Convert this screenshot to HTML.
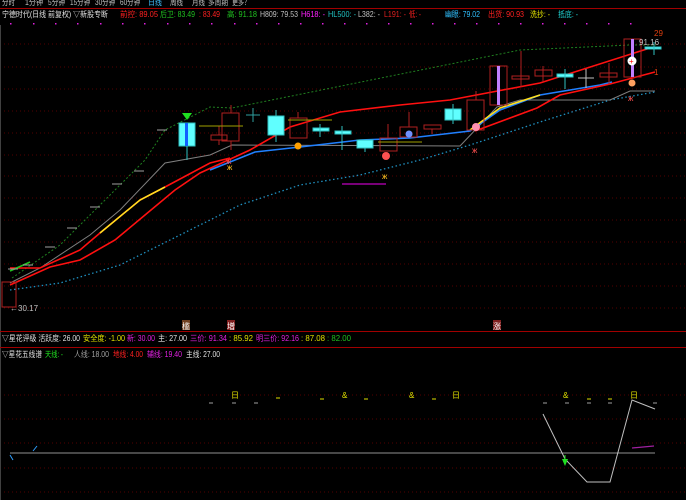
<!DOCTYPE html>
<html><head><meta charset="utf-8"><style>
html,body{margin:0;padding:0;background:#000;}
body{width:686px;height:500px;overflow:hidden;}
svg{display:block;font-family:"Liberation Sans","Noto Sans CJK SC",sans-serif;}
</style></head><body>
<svg width="686" height="500" viewBox="0 0 686 500" xmlns="http://www.w3.org/2000/svg">
<rect width="686" height="500" fill="#000"/>
<g font-size="8" fill="#c0c0c0" lengthAdjust="spacingAndGlyphs">
<text x="2" y="5" textLength="13" lengthAdjust="spacingAndGlyphs">分时</text><text x="25" y="5" textLength="18" lengthAdjust="spacingAndGlyphs">1分钟</text><text x="48" y="5" textLength="17" lengthAdjust="spacingAndGlyphs">5分钟</text><text x="70" y="5" textLength="20" lengthAdjust="spacingAndGlyphs">15分钟</text><text x="95" y="5" textLength="20" lengthAdjust="spacingAndGlyphs">30分钟</text><text x="120" y="5" textLength="20" lengthAdjust="spacingAndGlyphs">60分钟</text>
<text x="148" y="5" fill="#40c0ff" textLength="14" lengthAdjust="spacingAndGlyphs">日线</text><text x="170" y="5" textLength="13" lengthAdjust="spacingAndGlyphs">周线</text><text x="192" y="5" textLength="13" lengthAdjust="spacingAndGlyphs">月线</text><text x="208" y="5" textLength="20" lengthAdjust="spacingAndGlyphs">多周期</text><text x="232" y="5" textLength="18" lengthAdjust="spacingAndGlyphs">更多？</text>
</g>
<line x1="0" y1="8.5" x2="686" y2="8.5" stroke="#a00000"/>
<g font-size="8">
<text x="2" y="17" fill="#e0e0e0" textLength="106" lengthAdjust="spacingAndGlyphs">宁德时代(日线 前复权) ▽新股专断</text>
<text x="120" y="17" fill="#ff2020" textLength="38" lengthAdjust="spacingAndGlyphs">前控: 89.05</text>
<text x="160" y="17" fill="#20c020" textLength="35" lengthAdjust="spacingAndGlyphs">后卫: 83.49</text>
<text x="199" y="17" fill="#ff2020" textLength="21" lengthAdjust="spacingAndGlyphs">: 83.49</text>
<text x="227" y="17" fill="#20c020" textLength="30" lengthAdjust="spacingAndGlyphs">高: 91.18</text>
<text x="260" y="17" fill="#c0c0c0" textLength="38" lengthAdjust="spacingAndGlyphs">H809: 79.53</text>
<text x="301" y="17" fill="#ff20ff" textLength="24" lengthAdjust="spacingAndGlyphs">H618: -</text>
<text x="328" y="17" fill="#20c0c0" textLength="28" lengthAdjust="spacingAndGlyphs">HL500: -</text>
<text x="358" y="17" fill="#c0c0c0" textLength="22" lengthAdjust="spacingAndGlyphs">L382: -</text>
<text x="384" y="17" fill="#e02020" textLength="22" lengthAdjust="spacingAndGlyphs">L191: -</text>
<text x="409" y="17" fill="#ff2020" textLength="12" lengthAdjust="spacingAndGlyphs">低: -</text>
<text x="445" y="17" fill="#30c0ff" textLength="35" lengthAdjust="spacingAndGlyphs">幽眼: 79.02</text>
<text x="488" y="17" fill="#ff2020" textLength="36" lengthAdjust="spacingAndGlyphs">出货: 90.93</text>
<text x="530" y="17" fill="#e0e000" textLength="20" lengthAdjust="spacingAndGlyphs">洗抄: -</text>
<text x="558" y="17" fill="#20d0d0" textLength="20" lengthAdjust="spacingAndGlyphs">抵底: -</text>
</g>
<g fill="#e020e0"><rect x="10" y="23" width="1.5" height="1.5"/><rect x="33" y="23" width="1.5" height="1.5"/><rect x="55" y="23" width="1.5" height="1.5"/><rect x="77" y="23" width="1.5" height="1.5"/><rect x="100" y="23" width="1.5" height="1.5"/><rect x="122" y="23" width="1.5" height="1.5"/><rect x="144" y="23" width="1.5" height="1.5"/><rect x="167" y="23" width="1.5" height="1.5"/><rect x="189" y="23" width="1.5" height="1.5"/><rect x="211" y="23" width="1.5" height="1.5"/><rect x="234" y="23" width="1.5" height="1.5"/><rect x="256" y="23" width="1.5" height="1.5"/><rect x="278" y="23" width="1.5" height="1.5"/><rect x="300" y="23" width="1.5" height="1.5"/><rect x="322" y="23" width="1.5" height="1.5"/><rect x="344" y="23" width="1.5" height="1.5"/><rect x="366" y="23" width="1.5" height="1.5"/><rect x="388" y="23" width="1.5" height="1.5"/><rect x="410" y="23" width="1.5" height="1.5"/><rect x="432" y="23" width="1.5" height="1.5"/><rect x="454" y="23" width="1.5" height="1.5"/><rect x="476" y="23" width="1.5" height="1.5"/><rect x="498" y="23" width="1.5" height="1.5"/><rect x="520" y="23" width="1.5" height="1.5"/><rect x="542" y="23" width="1.5" height="1.5"/><rect x="564" y="23" width="1.5" height="1.5"/><rect x="586" y="23" width="1.5" height="1.5"/><rect x="608" y="23" width="1.5" height="1.5"/><rect x="630" y="23" width="1.5" height="1.5"/></g>
<g stroke="#700000" stroke-dasharray="1,3" stroke-width="0.8">
<line x1="0" y1="44" x2="686" y2="44"/><line x1="0" y1="67" x2="686" y2="67"/><line x1="0" y1="89" x2="686" y2="89"/><line x1="0" y1="111" x2="686" y2="111"/><line x1="0" y1="133" x2="686" y2="133"/><line x1="0" y1="155" x2="686" y2="155"/><line x1="0" y1="176" x2="686" y2="176"/><line x1="0" y1="198" x2="686" y2="198"/><line x1="0" y1="220" x2="686" y2="220"/><line x1="0" y1="242" x2="686" y2="242"/><line x1="0" y1="264" x2="686" y2="264"/><line x1="0" y1="286" x2="686" y2="286"/><line x1="0" y1="308" x2="686" y2="308"/>
<line x1="0" y1="395" x2="686" y2="395"/><line x1="0" y1="419" x2="686" y2="419"/><line x1="0" y1="443" x2="686" y2="443"/><line x1="0" y1="468" x2="686" y2="468"/><line x1="0" y1="492" x2="686" y2="492"/>
</g>
<line x1="0.5" y1="25" x2="0.5" y2="500" stroke="#404040"/>
<polyline fill="none" stroke="#208020" stroke-dasharray="2,2" points="12,278 60,245 100,205 145,160 165,130 210,107 232,108 520,50 630,45 656,45"/>
<polyline fill="none" stroke="#2090c0" stroke-dasharray="1.5,2.5" stroke-width="1.3" points="10,290 60,283 120,265 180,235 240,205 300,185 360,175 420,160 470,145 540,122 610,100 655,92"/>
<polyline fill="none" stroke="#808080" points="10,283 40,268 90,235 120,210 165,163 210,155 232,145 460,146 497,107 520,100 610,100 630,91 655,91"/>
<polyline fill="none" stroke="#ff1010" stroke-width="1.6" points="10,268 40,268 80,250 100,233 140,200 165,187 210,163 230,158"/>
<polyline fill="none" stroke="#ffe020" stroke-width="1.6" points="100,233 140,200 165,187"/>
<polyline fill="none" stroke="#ff1010" stroke-width="1.6" points="10,285 50,267 80,260 115,240 145,215 175,190 200,173 250,150 290,127 340,112 400,105 450,100 540,83 650,48"/>
<polyline fill="none" stroke="#2080ff" stroke-width="1.6" points="210,170 255,152 300,147 360,140 410,138 470,131 500,110 540,95 600,85 612,82"/>
<polyline fill="none" stroke="#ffe020" stroke-width="1.6" points="470,130 500,108 540,95"/>
<polyline fill="none" stroke="#ff1010" stroke-width="1.6" points="475,131 537,108 560,95 610,84 655,72"/>
<line x1="10" y1="271" x2="30" y2="262" stroke="#20c020" stroke-width="1.6"/>
<g stroke="#a0a0a0"><line x1="8" y1="269" x2="18" y2="269"/><line x1="23" y1="265" x2="33" y2="265"/><line x1="45" y1="247" x2="55" y2="247"/><line x1="67" y1="228" x2="77" y2="228"/><line x1="90" y1="207" x2="100" y2="207"/><line x1="112" y1="184" x2="122" y2="184"/><line x1="134" y1="171" x2="144" y2="171"/><line x1="157" y1="130" x2="167" y2="130"/></g>
<g fill="none" stroke="#b02020">
<rect x="211" y="135" width="16" height="5"/><line x1="219" y1="126" x2="219" y2="135"/><line x1="219" y1="140" x2="219" y2="145"/>
<rect x="222" y="113" width="17" height="28"/><line x1="231" y1="105" x2="231" y2="113"/><line x1="231" y1="141" x2="231" y2="150"/>
<rect x="290" y="118" width="17" height="20"/><line x1="298" y1="112" x2="298" y2="118"/>
<rect x="380" y="138" width="17" height="13"/><line x1="388" y1="124" x2="388" y2="138"/>
<rect x="400" y="127" width="17" height="10"/><line x1="409" y1="112" x2="409" y2="127"/>
<rect x="424" y="125" width="17" height="4"/><line x1="432" y1="129" x2="432" y2="134"/>
<rect x="467" y="100" width="17" height="30"/><line x1="476" y1="91" x2="476" y2="100"/>
<rect x="490" y="66" width="17" height="39"/>
<rect x="512" y="76" width="17" height="3"/><line x1="521" y1="51" x2="521" y2="87"/>
<rect x="535" y="70" width="17" height="6"/><line x1="543" y1="66" x2="543" y2="82"/>
<rect x="600" y="73" width="17" height="4"/><line x1="609" y1="63" x2="609" y2="85"/>
<rect x="624" y="39" width="17" height="38"/>
</g>
<g fill="#60ffff" stroke="#30c0c0">
<rect x="179" y="123" width="16" height="23"/><line x1="187" y1="146" x2="187" y2="160"/>
<rect x="268" y="116" width="16" height="19"/><line x1="276" y1="110" x2="276" y2="116"/><line x1="276" y1="135" x2="276" y2="142"/>
<rect x="313" y="128" width="16" height="3"/><line x1="320" y1="124" x2="320" y2="137"/>
<rect x="335" y="131" width="16" height="3"/><line x1="342" y1="126" x2="342" y2="150"/>
<rect x="357" y="140" width="16" height="8"/><line x1="365" y1="148" x2="365" y2="152"/>
<rect x="445" y="109" width="16" height="11"/><line x1="453" y1="104" x2="453" y2="124"/>
<rect x="557" y="74" width="16" height="3"/><line x1="565" y1="69" x2="565" y2="89"/>
<rect x="645" y="47" width="16" height="2"/><line x1="654" y1="42" x2="654" y2="55"/>
</g>
<rect x="185" y="123" width="3" height="23" fill="#1060ff"/>
<rect x="497" y="66" width="3" height="39" fill="#c080ff"/>
<rect x="631" y="39" width="3" height="38" fill="#c080ff"/>
<line x1="246" y1="115" x2="260" y2="115" stroke="#30a0a0"/><line x1="253" y1="108" x2="253" y2="122" stroke="#30a0a0"/>
<line x1="578" y1="78" x2="594" y2="78" stroke="#c0c0c0"/><line x1="586" y1="69" x2="586" y2="88" stroke="#c0c0c0"/>
<line x1="199" y1="126" x2="243" y2="126" stroke="#a0a000"/>
<line x1="288" y1="120" x2="332" y2="120" stroke="#a0a000"/>
<line x1="378" y1="142" x2="422" y2="142" stroke="#a0a000"/>
<line x1="342" y1="184" x2="386" y2="184" stroke="#a000a0" stroke-width="1.4"/>
<polygon points="182,113 192,113 187,120" fill="#20e020"/>
<circle cx="298" cy="146" r="3.5" fill="#ffa000"/>
<circle cx="386" cy="156" r="4" fill="#ff5050"/>
<circle cx="409" cy="134" r="3.5" fill="#7090ff"/>
<circle cx="476" cy="127" r="4" fill="#ff90b0"/>
<circle cx="632" cy="61" r="4.5" fill="#fff"/><text x="629" y="64" font-size="8" fill="#f00">+</text>
<circle cx="632" cy="83" r="3.5" fill="#ffa060"/>
<text x="226" y="164" font-size="8" fill="#ff5050">ж</text><text x="227" y="170" font-size="8" fill="#ffc020">ж</text>
<text x="382" y="179" font-size="8" fill="#ffc020">ж</text>
<text x="472" y="153" font-size="8" fill="#ff5050">ж</text>
<text x="628" y="101" font-size="8" fill="#ff5050">ж</text>
<text x="654" y="36" font-size="8" fill="#e04010">29</text>
<text x="654" y="75" font-size="8" fill="#e04010">1</text>
<text x="639" y="45" font-size="8" fill="#c0c0c0">91.16</text>
<rect x="2" y="282" width="14" height="25" fill="none" stroke="#b02020"/>
<text x="10" y="311" font-size="8" fill="#c0c0c0">←30.17</text>
<rect x="182" y="320" width="8" height="10" fill="#704020"/><text x="182" y="329" font-size="8" fill="#fff">槛</text>
<rect x="227" y="320" width="8" height="10" fill="#802020"/><text x="227" y="329" font-size="8" fill="#fff">增</text>
<rect x="493" y="320" width="8" height="10" fill="#802020"/><text x="493" y="329" font-size="8" fill="#fff">涨</text>
<line x1="0" y1="331.5" x2="686" y2="331.5" stroke="#a00000"/>
<g font-size="8">
<text x="2" y="341" fill="#e0e0e0" textLength="78" lengthAdjust="spacingAndGlyphs">▽星花评级 活跃度: 26.00</text>
<text x="83" y="341" fill="#e0e000" textLength="42" lengthAdjust="spacingAndGlyphs">安全度: -1.00</text>
<text x="127" y="341" fill="#e020e0" textLength="28" lengthAdjust="spacingAndGlyphs">新: 30.00</text>
<text x="158" y="341" fill="#e0e0e0" textLength="29" lengthAdjust="spacingAndGlyphs">主: 27.00</text>
<text x="190" y="341" fill="#e020e0" textLength="37" lengthAdjust="spacingAndGlyphs">三价: 91.34</text>
<text x="229" y="341" fill="#e0e000" textLength="24" lengthAdjust="spacingAndGlyphs">: 85.92</text>
<text x="256" y="341" fill="#e020e0" textLength="43" lengthAdjust="spacingAndGlyphs">明三价: 92.16</text>
<text x="301" y="341" fill="#e0e000" textLength="24" lengthAdjust="spacingAndGlyphs">: 87.08</text>
<text x="327" y="341" fill="#20c020" textLength="24" lengthAdjust="spacingAndGlyphs">: 82.00</text>
</g>
<line x1="0" y1="347.5" x2="686" y2="347.5" stroke="#a00000"/>
<g font-size="8">
<text x="2" y="357" fill="#e0e0e0" textLength="40" lengthAdjust="spacingAndGlyphs">▽星花五线谱</text>
<text x="45" y="357" fill="#20e020" textLength="18" lengthAdjust="spacingAndGlyphs">天线: -</text>
<text x="74" y="357" fill="#a0a0a0" textLength="35" lengthAdjust="spacingAndGlyphs">人线: 18.00</text>
<text x="113" y="357" fill="#ff2020" textLength="30" lengthAdjust="spacingAndGlyphs">地线: 4.00</text>
<text x="147" y="357" fill="#e020e0" textLength="35" lengthAdjust="spacingAndGlyphs">辅线: 19.40</text>
<text x="186" y="357" fill="#e0e0e0" textLength="34" lengthAdjust="spacingAndGlyphs">主线: 27.00</text>
</g>
<line x1="10" y1="453" x2="655" y2="453" stroke="#909090"/>
<polyline fill="none" stroke="#c0c0c0" points="543,414 565,459 587,482 610,482 632,400 655,409"/>
<line x1="632" y1="448" x2="654" y2="446" stroke="#a020a0" stroke-width="1.2"/>
<g fill="#e0e000" font-size="8"><text x="231" y="398">日</text><text x="452" y="398">日</text><text x="630" y="398">日</text><text x="342" y="398">&amp;</text><text x="409" y="398">&amp;</text><text x="563" y="398">&amp;</text></g>
<g stroke="#e0e000"><line x1="276" y1="398" x2="280" y2="398"/><line x1="320" y1="399" x2="324" y2="399"/><line x1="364" y1="399" x2="368" y2="399"/><line x1="432" y1="399" x2="436" y2="399"/><line x1="587" y1="399" x2="591" y2="399"/><line x1="608" y1="399" x2="612" y2="399"/></g>
<g stroke="#a0a0a0"><line x1="209" y1="403" x2="213" y2="403"/><line x1="232" y1="403" x2="236" y2="403"/><line x1="254" y1="403" x2="258" y2="403"/><line x1="543" y1="403" x2="547" y2="403"/><line x1="565" y1="403" x2="569" y2="403"/><line x1="587" y1="403" x2="591" y2="403"/><line x1="608" y1="403" x2="612" y2="403"/><line x1="653" y1="403" x2="657" y2="403"/></g>
<line x1="10" y1="455" x2="13" y2="460" stroke="#30a0ff"/>
<line x1="33" y1="451" x2="37" y2="446" stroke="#30a0ff"/>
<polygon points="562,459 568,459 565,466" fill="#20e020"/><line x1="565" y1="455" x2="565" y2="460" stroke="#20e020"/>
</svg>
</body></html>
